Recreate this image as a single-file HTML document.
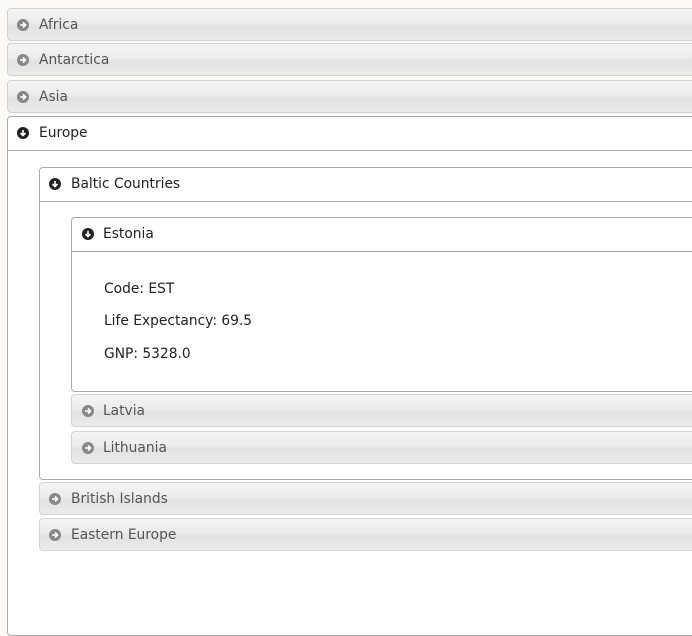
<!DOCTYPE html>
<html><head><style>
html,body{margin:0;}
body{background:#fbfaf6;width:692px;height:555px;overflow:hidden;position:relative;font-family:"DejaVu Sans",Verdana,sans-serif;font-size:13.8px;}
.h{position:absolute;right:-6px;border:1px solid #d3d3d3;border-radius:4px;background:linear-gradient(#f4f4f4 0%,#ececec 45%,#e2e2e2 55%,#ebebeb 100%);color:#555;box-sizing:border-box;height:33px;}
.h span{position:absolute;top:8px;}
.a{position:absolute;right:-6px;border:1px solid #aaa;border-radius:4px;background:#fff;box-sizing:border-box;}
.a>.t{position:absolute;left:0;right:0;top:0;height:33px;border-bottom:1px solid #aaa;color:#222;}
.a>.t span{position:absolute;top:8px;}
.ic{position:absolute;top:10px;width:12px;height:12px;border-radius:50%;background:#888;}
.ic.d{background:#222;}
.ic svg{position:absolute;left:0;top:0}
.c{position:absolute;left:104px;color:#222;}
</style></head><body>
<div class="h" style="left:7px;top:8px"><i class="ic" style="left:9px"><svg width="12" height="12"><path d="M3 6h5M6 3.5L8.5 6 6 8.5" stroke="#fff" stroke-width="1.6" fill="none"/></svg></i><span style="left:31px">Africa</span></div>
<div class="h" style="left:7px;top:43px"><i class="ic" style="left:9px"><svg width="12" height="12"><path d="M3 6h5M6 3.5L8.5 6 6 8.5" stroke="#fff" stroke-width="1.6" fill="none"/></svg></i><span style="left:31px">Antarctica</span></div>
<div class="h" style="left:7px;top:80px"><i class="ic" style="left:9px"><svg width="12" height="12"><path d="M3 6h5M6 3.5L8.5 6 6 8.5" stroke="#fff" stroke-width="1.6" fill="none"/></svg></i><span style="left:31px">Asia</span></div>
<div class="a" style="left:7px;top:116px;height:520px"><div class="t"><i class="ic d" style="left:9px"><svg width="12" height="12"><path d="M6 3v5M3.5 6L6 8.5 8.5 6" stroke="#fff" stroke-width="1.6" fill="none"/></svg></i><span style="left:31px">Europe</span></div></div>
<div class="a" style="left:39px;top:167px;height:313px"><div class="t"><i class="ic d" style="left:9px"><svg width="12" height="12"><path d="M6 3v5M3.5 6L6 8.5 8.5 6" stroke="#fff" stroke-width="1.6" fill="none"/></svg></i><span style="left:31px">Baltic Countries</span></div></div>
<div class="a" style="left:71px;top:217px;height:175px"><div class="t"><i class="ic d" style="left:10px"><svg width="12" height="12"><path d="M6 3v5M3.5 6L6 8.5 8.5 6" stroke="#fff" stroke-width="1.6" fill="none"/></svg></i><span style="left:31px">Estonia</span></div></div>
<div class="c" style="top:281px">Code: EST</div>
<div class="c" style="top:313px">Life Expectancy: 69.5</div>
<div class="c" style="top:346px">GNP: 5328.0</div>
<div class="h" style="left:71px;top:394px"><i class="ic" style="left:10px"><svg width="12" height="12"><path d="M3 6h5M6 3.5L8.5 6 6 8.5" stroke="#fff" stroke-width="1.6" fill="none"/></svg></i><span style="left:31px">Latvia</span></div>
<div class="h" style="left:71px;top:431px"><i class="ic" style="left:10px"><svg width="12" height="12"><path d="M3 6h5M6 3.5L8.5 6 6 8.5" stroke="#fff" stroke-width="1.6" fill="none"/></svg></i><span style="left:31px">Lithuania</span></div>
<div class="h" style="left:39px;top:482px"><i class="ic" style="left:9px"><svg width="12" height="12"><path d="M3 6h5M6 3.5L8.5 6 6 8.5" stroke="#fff" stroke-width="1.6" fill="none"/></svg></i><span style="left:31px">British Islands</span></div>
<div class="h" style="left:39px;top:518px"><i class="ic" style="left:9px"><svg width="12" height="12"><path d="M3 6h5M6 3.5L8.5 6 6 8.5" stroke="#fff" stroke-width="1.6" fill="none"/></svg></i><span style="left:31px">Eastern Europe</span></div>
</body></html>
